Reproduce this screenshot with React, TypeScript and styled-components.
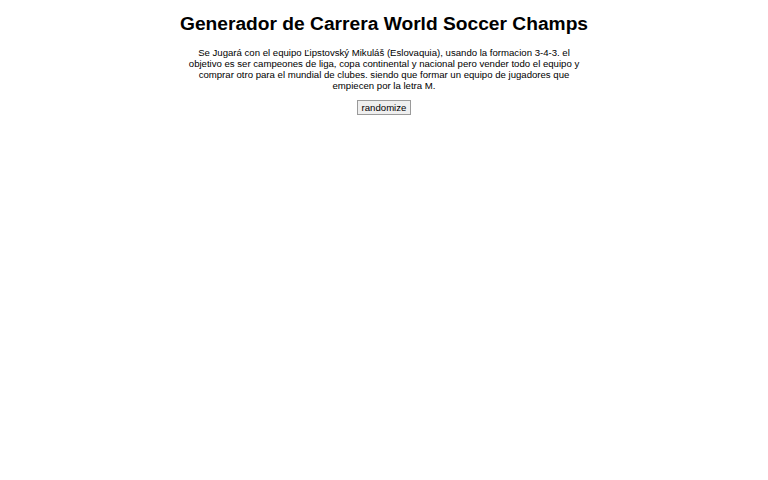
import styled, { createGlobalStyle } from "styled-components";

const GlobalStyle = createGlobalStyle`
  body {
    margin: 0;
    background: #ffffff;
    font-family: "Liberation Sans", Arial, sans-serif;
    color: #000000;
  }
`;

const Page = styled.div`
  display: flex;
  flex-direction: column;
  align-items: center;
  padding-top: 13px;
`;

const Title = styled.h1`
  margin: 0 0 12px;
  font-size: 19.2px;
  font-weight: bold;
  text-align: center;
`;

const Description = styled.p`
  margin: 0 0 9px;
  width: 400px;
  font-size: 9.6px;
  line-height: 11px;
  text-align: center;
`;

const RandomButton = styled.button`
  font-family: "Liberation Sans", Arial, sans-serif;
  font-size: 9.6px;
  padding: 1px 4px;
  background: #efefef;
  border: 1px solid #9a9a9a;
  border-radius: 0;
  color: #000000;
`;

export default function App() {
  return (
    <>
      <GlobalStyle />
      <Page>
        <Title>Generador de Carrera World Soccer Champs</Title>
        <Description>
          Se Jugará con el equipo Ľipstovský Mikuláš (Eslovaquia), usando la
          formacion 3-4-3. el objetivo es ser campeones de liga, copa
          continental y nacional pero vender todo el equipo y comprar otro para
          el mundial de clubes. siendo que formar un equipo de jugadores que
          empiecen por la letra M.
        </Description>
        <RandomButton>randomize</RandomButton>
      </Page>
    </>
  );
}
